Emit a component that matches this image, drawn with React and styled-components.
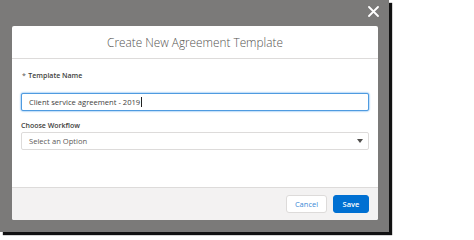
import React from "react";
import styled, { createGlobalStyle } from "styled-components";

const Global = createGlobalStyle`
  html, body { margin: 0; padding: 0; background: #ffffff; }
  body { font-family: "Open Sans", "Liberation Sans", sans-serif; min-height: 239px; }
  * { box-sizing: border-box; }
`;

const Page = styled.div`
  width: 474px;
  height: 239px;
  background: #ffffff;
`;

const Backdrop = styled.div`
  width: 389px;
  height: 232px;
  background: #7b7a79;
  box-shadow: 3px 3px 1px #111;
  display: flex;
  flex-direction: column;
  padding: 4px 11px 12px 12px;
`;

const TopBar = styled.div`
  height: 22px;
  display: flex;
  justify-content: flex-end;
  align-items: flex-start;
`;

const CloseButton = styled.button`
  width: 14px;
  height: 14px;
  padding: 0;
  margin-right: -2px;
  border: none;
  background: transparent;
  display: flex;
  align-items: center;
  justify-content: center;
  cursor: pointer;
`;

const Modal = styled.div`
  width: 366px;
  height: 194px;
  background: #ffffff;
  border-radius: 2px;
  display: flex;
  flex-direction: column;
  overflow: hidden;
`;

const Header = styled.div`
  height: 33px;
  border-bottom: 1px solid #dddbda;
  display: flex;
  align-items: center;
  justify-content: center;
`;

const Title = styled.h2`
  margin: 0;
  font-family: "Open Sans", sans-serif;
  font-weight: 300;
  font-size: 11.8px;
  color: #54524f;
`;

const Body = styled.div`
  flex: 1;
  padding: 12px 9px 0 9px;
  display: flex;
  flex-direction: column;
`;

const Label = styled.label`
  font-family: "Open Sans", sans-serif;
  font-size: 7px;
  font-weight: 600;
  color: #3e3e3c;
  line-height: 10px;
  display: flex;
  align-items: center;
  padding-left: ${(p) => p.$indent || 0}px;
  margin-top: ${(p) => p.$top || 0}px;
  margin-bottom: ${(p) => p.$bottom || 0}px;
`;

const Required = styled.span`
  color: #54524f;
  margin-right: 2.5px;
  font-weight: 400;
`;

const Field = styled.div`
  height: 18px;
  border: 1px solid ${(p) => (p.$focus ? "#4f9be0" : "#dddbda")};
  border-radius: 2px;
  box-shadow: ${(p) => (p.$focus ? "0 0 2px #2b8ce6" : "none")};
  background: #ffffff;
  display: flex;
  align-items: center;
  padding: 0 5px 0 7px;
  font-family: "Open Sans", sans-serif;
  font-size: 7.6px;
  color: ${(p) => (p.$placeholder ? "#5c5a58" : "#3e3e3c")};
`;

const Caret = styled.span`
  display: inline-block;
  width: 1px;
  height: 10px;
  background: #222;
  margin-left: 0.5px;
`;

const Grow = styled.span`
  flex: 1;
`;

const Arrow = styled.span`
  width: 0;
  height: 0;
  border-left: 3.5px solid transparent;
  border-right: 3.5px solid transparent;
  border-top: 4px solid #514f4d;
`;

const Footer = styled.div`
  height: 33px;
  background: #f3f2f2;
  border-top: 1px solid #dddbda;
  display: flex;
  align-items: center;
  justify-content: flex-end;
  gap: 6px;
  padding: 0 9px 0 0;
`;

const Button = styled.button`
  height: 18px;
  width: ${(p) => p.$w}px;
  border-radius: 3px;
  border: 1px solid ${(p) => (p.$brand ? "#0070d2" : "#dddbda")};
  background: ${(p) => (p.$brand ? "#0070d2" : "#ffffff")};
  color: ${(p) => (p.$brand ? "#ffffff" : "#3b8ad6")};
  font-family: "Open Sans", sans-serif;
  font-size: 7.5px;
  font-weight: ${(p) => (p.$brand ? 600 : 400)};
  padding: 0;
  display: flex;
  align-items: center;
  justify-content: center;
`;

export default function App() {
  return (
    <Page>
      <Global />
      <Backdrop>
        <TopBar>
          <CloseButton aria-label="Close">
            <svg width="11" height="11" viewBox="0 0 11 11">
              <path d="M1 1 L10 10 M10 1 L1 10" stroke="#ffffff" strokeWidth="1.8" strokeLinecap="round" />
            </svg>
          </CloseButton>
        </TopBar>
        <Modal>
          <Header>
            <Title>Create New Agreement Template</Title>
          </Header>
          <Body>
            <Label $indent={1} $bottom={12}>
              <Required>*</Required>Template Name
            </Label>
            <Field $focus>
              Client service agreement - 2019<Caret />
            </Field>
            <Label $top={10} $bottom={1}>Choose Workflow</Label>
            <Field $placeholder>
              <Grow>Select an Option</Grow>
              <Arrow />
            </Field>
          </Body>
          <Footer>
            <Button $w={41}>Cancel</Button>
            <Button $w={36} $brand>Save</Button>
          </Footer>
        </Modal>
      </Backdrop>
    </Page>
  );
}
